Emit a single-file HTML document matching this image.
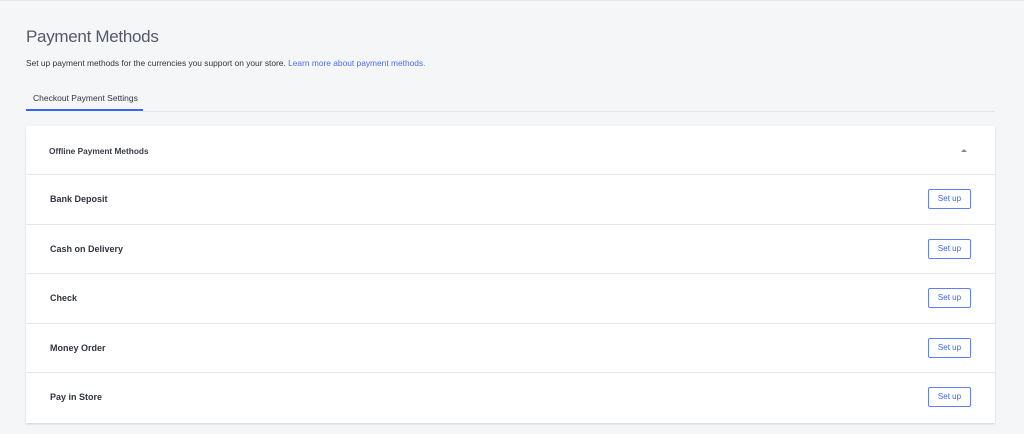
<!DOCTYPE html>
<html><head><style>
*{margin:0;padding:0;box-sizing:border-box}
body{width:1024px;height:434px;background:#f5f6f8;font-family:"Liberation Sans",sans-serif;position:relative;overflow:hidden;border-top:1px solid #e8e9ed}
.t{position:absolute;left:26px;top:26px;font-size:17px;color:#55586a;letter-spacing:-0.3px}
.s{position:absolute;left:26px;top:57px;font-size:8.4px;color:#313440}
.s a{color:#4a6cf5;text-decoration:none}
.tab{position:absolute;left:33px;top:92px;font-size:8.5px;color:#313440}
.ul{position:absolute;left:26px;top:108px;width:117px;height:2px;background:#3c64f4}
.gl{position:absolute;left:143px;top:109.5px;width:852px;height:1px;background:#e2e4ea}
.card{position:absolute;left:26px;top:125px;width:969px;height:297px;background:#fff;box-shadow:0 1px 2px rgba(0,0,0,.15)}
.h{height:49px;border-bottom:1px solid #e5e7ec;position:relative}
.h span{position:absolute;left:23px;top:20px;font-size:8.3px;font-weight:bold;color:#3a3d48}
.h i{position:absolute;left:935px;top:23px;border-left:3px solid transparent;border-right:3px solid transparent;border-bottom:3px solid #888}
.r{height:49.6px;border-bottom:1px solid #e5e7ec;position:relative}
.r:last-child{border-bottom:none}
.r span{position:absolute;left:24px;top:19px;font-size:9px;font-weight:bold;color:#313440}
.r b{position:absolute;left:902px;top:14px;width:43px;height:20px;border:1px solid #5f7ff7;border-radius:2px;font-weight:normal;font-size:8px;color:#3c64f4;text-align:center;line-height:18px}
</style></head><body>
<div class="t">Payment Methods</div>
<div class="s">Set up payment methods for the currencies you support on your store. <a>Learn more about payment methods.</a></div>
<div class="tab">Checkout Payment Settings</div>
<div class="ul"></div><div class="gl"></div>
<div class="card">
<div class="h"><span>Offline Payment Methods</span><i></i></div>
<div class="r"><span>Bank Deposit</span><b>Set up</b></div>
<div class="r"><span>Cash on Delivery</span><b>Set up</b></div>
<div class="r"><span>Check</span><b>Set up</b></div>
<div class="r"><span>Money Order</span><b>Set up</b></div>
<div class="r"><span>Pay in Store</span><b>Set up</b></div>
</div>
</body></html>
